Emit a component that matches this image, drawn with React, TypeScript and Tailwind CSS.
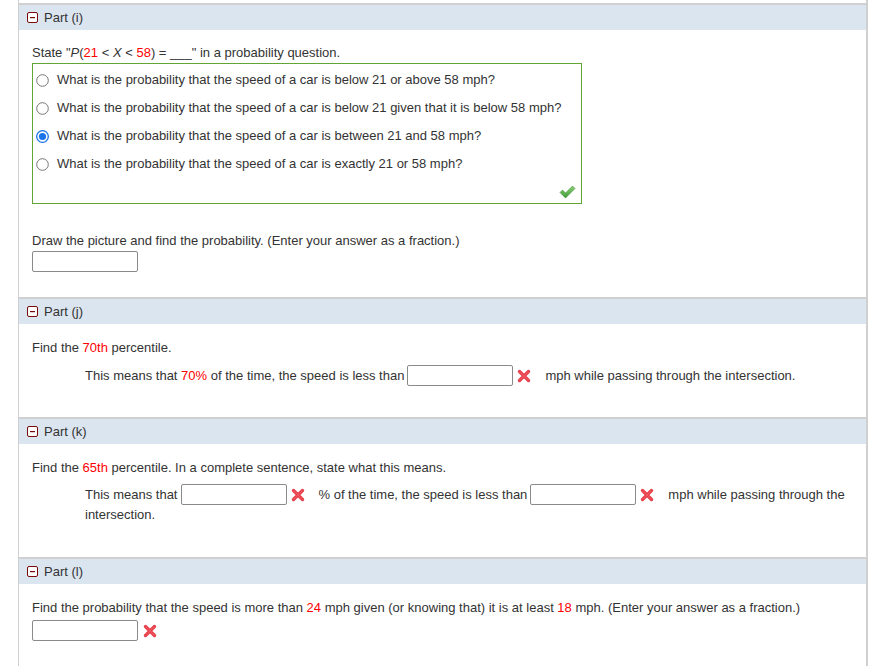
import React from "react";

const Minus = () => (
  <svg width="11" height="11" viewBox="0 0 11 11" className="shrink-0">
    <rect x="0.5" y="0.5" width="10" height="10" rx="1.5" fill="#fff" stroke="#7a0a0a" />
    <rect x="3" y="5" width="5" height="1.2" fill="#7a0a0a" />
  </svg>
);

const XIcon = () => (
  <svg width="14" height="14" viewBox="0 0 14 14" className="inline-block align-middle shrink-0">
    <path d="M2.5 2.5 L11.5 11.5 M11.5 2.5 L2.5 11.5" stroke="#e8414b" strokeWidth="3.4" strokeLinecap="round" />
    <path d="M3 3 L11 11 M11 3 L3 11" stroke="#f2767d" strokeWidth="0.8" strokeLinecap="round" opacity="0.6" />
  </svg>
);

const Check = () => (
  <svg width="17" height="14" viewBox="0 0 17 14">
    <defs>
      <linearGradient id="cg" x1="0" y1="0" x2="0" y2="1">
        <stop offset="0" stopColor="#8fd07a" />
        <stop offset="1" stopColor="#3d9a35" />
      </linearGradient>
    </defs>
    <path d="M1 7.5 L3.5 5 L6.5 8 L13.5 1 L16 3.5 L6.5 13 Z" fill="url(#cg)" stroke="#3f8f36" strokeWidth="0.6" />
  </svg>
);

const Radio = ({ checked }: { checked?: boolean }) => (
  <svg width="13" height="13" viewBox="0 0 13 13" className="shrink-0">
    {checked ? (
      <>
        <circle cx="6.5" cy="6.5" r="5.8" fill="#fff" stroke="#1a73e8" strokeWidth="1.3" />
        <circle cx="6.5" cy="6.5" r="3.6" fill="#1a73e8" />
      </>
    ) : (
      <circle cx="6.5" cy="6.5" r="5.8" fill="#fff" stroke="#767676" strokeWidth="1" />
    )}
  </svg>
);

const Input = ({ w = 106 }: { w?: number }) => (
  <span
    className="inline-block align-middle h-[21px] border border-[#8a8a8a] rounded-[2px] bg-white"
    style={{ width: w }}
  />
);

const Header = ({ label }: { label: string }) => (
  <div className="border-t-2 border-[#d0d0d0] bg-[#dbe5ef] h-[27px] flex items-center gap-[6px] pl-[8px]">
    <Minus />
    <span className="text-[13px] text-[#333]">{label}</span>
  </div>
);

const R = ({ children }: { children: React.ReactNode }) => (
  <span className="text-[#ff0000]">{children}</span>
);

export default function App() {
  const options = [
    "What is the probability that the speed of a car is below 21 or above 58 mph?",
    "What is the probability that the speed of a car is below 21 given that it is below 58 mph?",
    "What is the probability that the speed of a car is between 21 and 58 mph?",
    "What is the probability that the speed of a car is exactly 21 or 58 mph?",
  ];
  return (
    <div
      className="w-[871px] h-[666px] bg-white overflow-hidden text-[13px] text-[#333]"
      style={{ fontFamily: '"Liberation Sans", Arial, sans-serif' }}
    >
      <div className="ml-[18px] w-[850px] h-full border-l-[1.5px] border-r-2 border-[#d0d0d0] pt-[3px]">
        {/* Part i */}
        <Header label="Part (i)" />
        <div className="pl-[13px] pt-[15px] h-[267px]">
          <div className="leading-[16px]">
            State "<i>P</i>(<R>21</R> &lt; <i>X</i> &lt; <R>58</R>) = ___" in a probability question.
          </div>
          <div className="mt-[2px] w-[550px] border border-[#62a534] pt-[2px]">
            {options.map((o, i) => (
              <div key={i} className="h-[28px] flex items-center gap-[8px] pl-[3px]">
                <Radio checked={i === 2} />
                <span>{o}</span>
              </div>
            ))}
            <div className="h-[25px] flex items-center justify-end pr-[5px] pt-[2px]">
              <Check />
            </div>
          </div>
          <div className="mt-[29px] leading-[16px]">
            Draw the picture and find the probability. (Enter your answer as a fraction.)
          </div>
          <div className="mt-[2px] flex">
            <Input />
          </div>
        </div>

        {/* Part j */}
        <Header label="Part (j)" />
        <div className="pl-[13px] pt-[16px] h-[93px]">
          <div className="leading-[16px]">
            Find the <R>70th</R> percentile.
          </div>
          <div className="mt-[9px] pl-[53px] leading-[20px] flex items-center">
            <span>
              This means that <R>70%</R> of the time, the speed is less than
            </span>
            <span className="ml-[3px]"><Input /></span>
            <span className="ml-[4px] flex"><XIcon /></span>
            <span className="ml-[14px]">mph while passing through the intersection.</span>
          </div>
        </div>

        {/* Part k */}
        <Header label="Part (k)" />
        <div className="pl-[13px] pt-[16px] h-[113px]">
          <div className="leading-[16px]">
            Find the <R>65th</R> percentile. In a complete sentence, state what this means.
          </div>
          <div className="mt-[8px] pl-[53px] leading-[20px]">
            <div className="flex items-center">
              <span>This means that</span>
              <span className="ml-[3px]"><Input /></span>
              <span className="ml-[4px] flex"><XIcon /></span>
              <span className="ml-[14px]">% of the time, the speed is less than</span>
              <span className="ml-[3px]"><Input /></span>
              <span className="ml-[4px] flex"><XIcon /></span>
              <span className="ml-[14px]">mph while passing through the</span>
            </div>
            <div>intersection.</div>
          </div>
        </div>

        {/* Part l */}
        <Header label="Part (l)" />
        <div className="pl-[13px] pt-[16px]">
          <div className="leading-[16px]">
            Find the probability that the speed is more than <R>24</R> mph given (or knowing that) it is at least <R>18</R> mph. (Enter your answer as a fraction.)
          </div>
          <div className="mt-[4px] flex items-center">
            <Input />
            <span className="ml-[5px] flex"><XIcon /></span>
          </div>
        </div>
      </div>
    </div>
  );
}
